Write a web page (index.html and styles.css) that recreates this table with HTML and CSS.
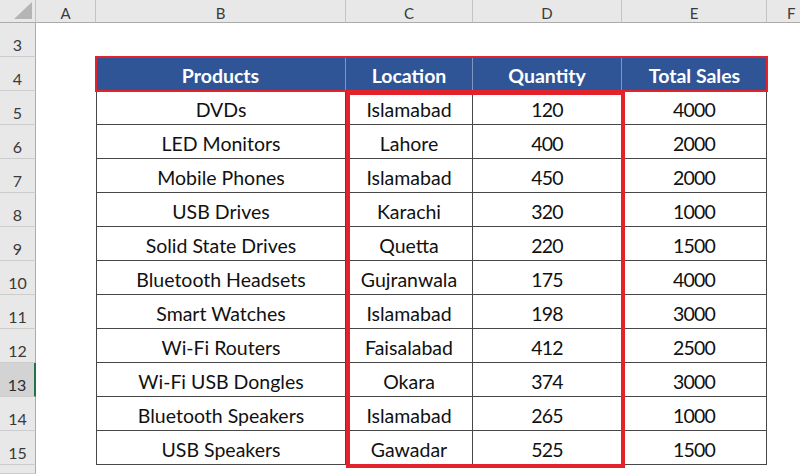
FILE: index.html
```html
<!DOCTYPE html>
<html lang="en">
<head>
<meta charset="utf-8">
<title>Sales Sheet</title>
<link rel="stylesheet" href="styles.css">
</head>
<body>
<div class="stack">
<div class="sheet">
  <div class="corner"><span class="tri"></span></div>
  <div class="colhdr">A</div>
  <div class="colhdr">B</div>
  <div class="colhdr">C</div>
  <div class="colhdr">D</div>
  <div class="colhdr">E</div>
  <div class="colhdr colhdr-f">F</div>

  <div class="rowhdr">3</div><div class="blank"></div><div class="blank"></div><div class="blank"></div><div class="blank"></div><div class="blank"></div><div class="blank"></div>

  <div class="rowhdr">4</div><div class="blank"></div>
  <div class="th th-first">Products</div><div class="th">Location</div><div class="th">Quantity</div><div class="th th-last">Total Sales</div>
  <div class="blank"></div>

  <div class="rowhdr">5</div><div class="blank"></div>
  <div class="td td-first">DVDs</div><div class="td">Islamabad</div><div class="td num">120</div><div class="td num">4000</div><div class="blank"></div>

  <div class="rowhdr">6</div><div class="blank"></div>
  <div class="td td-first">LED Monitors</div><div class="td">Lahore</div><div class="td num">400</div><div class="td num">2000</div><div class="blank"></div>

  <div class="rowhdr">7</div><div class="blank"></div>
  <div class="td td-first">Mobile Phones</div><div class="td">Islamabad</div><div class="td num">450</div><div class="td num">2000</div><div class="blank"></div>

  <div class="rowhdr">8</div><div class="blank"></div>
  <div class="td td-first">USB Drives</div><div class="td">Karachi</div><div class="td num">320</div><div class="td num">1000</div><div class="blank"></div>

  <div class="rowhdr">9</div><div class="blank"></div>
  <div class="td td-first">Solid State Drives</div><div class="td">Quetta</div><div class="td num">220</div><div class="td num">1500</div><div class="blank"></div>

  <div class="rowhdr">10</div><div class="blank"></div>
  <div class="td td-first">Bluetooth Headsets</div><div class="td">Gujranwala</div><div class="td num">175</div><div class="td num">4000</div><div class="blank"></div>

  <div class="rowhdr">11</div><div class="blank"></div>
  <div class="td td-first">Smart Watches</div><div class="td">Islamabad</div><div class="td num">198</div><div class="td num">3000</div><div class="blank"></div>

  <div class="rowhdr">12</div><div class="blank"></div>
  <div class="td td-first">Wi-Fi Routers</div><div class="td">Faisalabad</div><div class="td num">412</div><div class="td num">2500</div><div class="blank"></div>

  <div class="rowhdr rowhdr-sel">13</div><div class="blank"></div>
  <div class="td td-first">Wi-Fi USB Dongles</div><div class="td">Okara</div><div class="td num">374</div><div class="td num">3000</div><div class="blank"></div>

  <div class="rowhdr">14</div><div class="blank"></div>
  <div class="td td-first">Bluetooth Speakers</div><div class="td">Islamabad</div><div class="td num">265</div><div class="td num">1000</div><div class="blank"></div>

  <div class="rowhdr">15</div><div class="blank"></div>
  <div class="td td-first">USB Speakers</div><div class="td">Gawadar</div><div class="td num">525</div><div class="td num">1500</div><div class="blank"></div>

  <div class="rowhdr"></div><div class="blank"></div><div class="blank"></div><div class="blank"></div><div class="blank"></div><div class="blank"></div><div class="blank"></div>
</div>
<div class="overlay">
  <div class="hdr-outline"></div>
  <div class="sel-outline"></div>
</div>
</div>
</body>
</html>
```
FILE: styles.css
```css
* { box-sizing: border-box; }
html, body { margin: 0; padding: 0; background: #ffffff; }
body { width: 800px; height: 474px; overflow: hidden; }

.stack { display: grid; }
.stack > * { grid-area: 1 / 1; }

.sheet,
.overlay {
  display: grid;
  grid-template-columns: 36px 60px 250px 127px 149px 145px 33px;
  grid-template-rows: 23px repeat(13, 34px) 9px;
}
.sheet {
  font-family: "Lato", "Open Sans", sans-serif;
  color: #111;
}
.overlay { pointer-events: none; }

.corner {
  background: #e8e8e8;
  border-right: 1px solid #c4c4c4;
  border-bottom: 1px solid #ababab;
  display: flex;
  justify-content: flex-end;
  align-items: flex-end;
  padding: 0 3px 3px 0;
}
.tri {
  width: 18px;
  height: 17px;
  background: #b5b5b5;
  clip-path: polygon(100% 0, 100% 100%, 0 100%);
}

.colhdr {
  background: #e8e8e8;
  border-right: 1px solid #c4c4c4;
  border-bottom: 1px solid #ababab;
  display: flex;
  justify-content: center;
  align-items: center;
  padding-top: 3px;
  font-size: 15px;
  color: #3a3a3a;
}
.colhdr-f { justify-content: flex-start; padding-left: 20px; border-right: 0; }

.rowhdr {
  background: #e8e8e8;
  border-right: 1px solid #ababab;
  border-bottom: 1px solid #cdcdcd;
  display: flex;
  justify-content: center;
  align-items: flex-end;
  padding-bottom: 3px;
  font-size: 16px;
  line-height: 1;
  color: #3a3a3a;
}
.rowhdr-sel {
  background: #d3d3d3;
  border-right: 2px solid #217346;
  color: #2d2d2d;
}

.blank { background: #ffffff; }

.th {
  background: #2f5597;
  color: #ffffff;
  font-weight: 700;
  font-size: 19.5px;
  display: flex;
  justify-content: center;
  align-items: center;
  padding-top: 2px;
  border-right: 1px solid #8095c0;
}
.th-last { border-right: 0; }

.td {
  display: flex;
  justify-content: center;
  align-items: center;
  font-size: 19.5px;
  color: #111;
  border-right: 1px solid #474747;
  border-bottom: 1px solid #474747;
  padding-top: 3px;
}
.td-first { border-left: 1px solid #474747; }
.num { letter-spacing: -0.8px; }

.hdr-outline {
  grid-column: 3 / 7;
  grid-row: 3 / 4;
  margin: -1px -1px -1px -1px;
  border: 2px solid #e3222c;
}
.sel-outline {
  grid-column: 4 / 6;
  grid-row: 4 / 15;
  margin: 0 -3px -3px 0;
  border: 4px solid #e3222c;
}
```
